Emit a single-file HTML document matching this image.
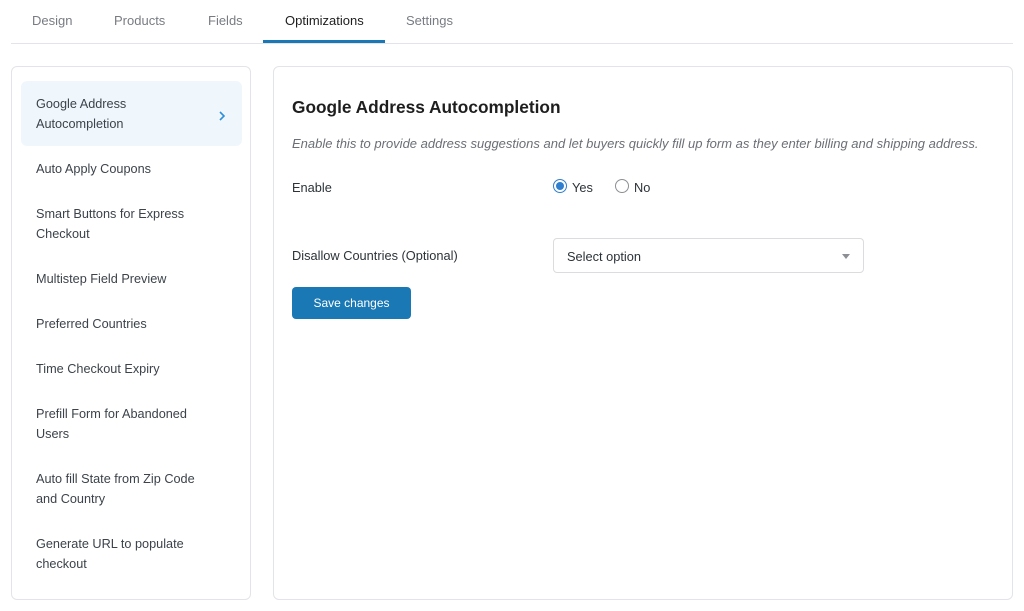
<!DOCTYPE html>
<html><head><style>
*{box-sizing:border-box;margin:0;padding:0}
body{width:1024px;height:611px;background:#fff;font-family:"Liberation Sans",sans-serif;color:#3c434a;position:relative;overflow:hidden}
.tabs{position:absolute;left:11px;top:0;width:1002px;height:44px;border-bottom:1px solid #e2e4e9}
.tab{position:absolute;top:13px;font-size:13px;color:#787c82}
.tab.a{color:#1e1e1e}
.ul{position:absolute;left:263px;top:40px;width:122px;height:3px;background:#1a78b4}
.side{position:absolute;left:11px;top:66px;width:240px;height:534px;border:1px solid #e2e4e9;border-radius:6px}
.it{position:absolute;left:36px;font-size:12.7px;line-height:20px;color:#3c434a}
.act{position:absolute;left:9px;top:14px;width:221px;height:65px;background:#eff7fd;border-radius:6px}
.main{position:absolute;left:273px;top:66px;width:740px;height:534px;border:1px solid #e2e4e9;border-radius:6px}
h2{position:absolute;left:292px;top:97px;font-size:17.3px;color:#1e1e1e}
.desc{position:absolute;left:292px;top:136px;font-size:13px;font-style:italic;color:#6b6f75}
.lbl{position:absolute;left:292px;font-size:12.8px;color:#2c3338}
.radio{position:absolute;top:179px;width:14px;height:14px;border:1px solid #8c8f94;border-radius:50%}
.sel{position:absolute;left:553px;top:238px;width:311px;height:35px;border:1px solid #dcdcde;border-radius:4px;font-size:12.8px;color:#2c3338;padding:10px 13px}
.btn{position:absolute;left:292px;top:287px;width:119px;height:32px;background:#1a78b4;border-radius:4px;color:#fff;font-size:12px;text-align:center;line-height:32px}
</style></head><body>
<div class="tabs"></div>
<div class="tab" style="left:32px">Design</div>
<div class="tab" style="left:114px">Products</div>
<div class="tab" style="left:208px">Fields</div>
<div class="tab a" style="left:285px">Optimizations</div>
<div class="tab" style="left:406px">Settings</div>
<div class="ul"></div>
<div class="side"><div class="act"></div>
<svg style="position:absolute;left:206px;top:44px" width="8" height="10"><path d="M2 1l4 4-4 4" stroke="#2f8fd8" stroke-width="1.6" fill="none"/></svg>
</div>
<div class="it" style="top:94px">Google Address<br>Autocompletion</div>
<div class="it" style="top:159px">Auto Apply Coupons</div>
<div class="it" style="top:204px">Smart Buttons for Express<br>Checkout</div>
<div class="it" style="top:269px">Multistep Field Preview</div>
<div class="it" style="top:314px">Preferred Countries</div>
<div class="it" style="top:359px">Time Checkout Expiry</div>
<div class="it" style="top:404px">Prefill Form for Abandoned<br>Users</div>
<div class="it" style="top:469px">Auto fill State from Zip Code<br>and Country</div>
<div class="it" style="top:534px">Generate URL to populate<br>checkout</div>
<div class="main"></div>
<h2>Google Address Autocompletion</h2>
<div class="desc">Enable this to provide address suggestions and let buyers quickly fill up form as they enter billing and shipping address.</div>
<div class="lbl" style="top:180px">Enable</div>
<div class="radio" style="left:553px;border-color:#2f7fd0"><div style="width:8px;height:8px;border-radius:50%;background:#2f7fd0;margin:2px"></div></div>
<div class="lbl" style="left:572px;top:180px">Yes</div>
<div class="radio" style="left:615px"></div>
<div class="lbl" style="left:634px;top:180px">No</div>
<div class="lbl" style="top:248px">Disallow Countries (Optional)</div>
<div class="sel">Select option<span style="position:absolute;right:13px;top:15px;border:4.5px solid transparent;border-top:5px solid #8c8f94;border-bottom:0"></span></div>
<div class="btn">Save changes</div>
</body></html>
